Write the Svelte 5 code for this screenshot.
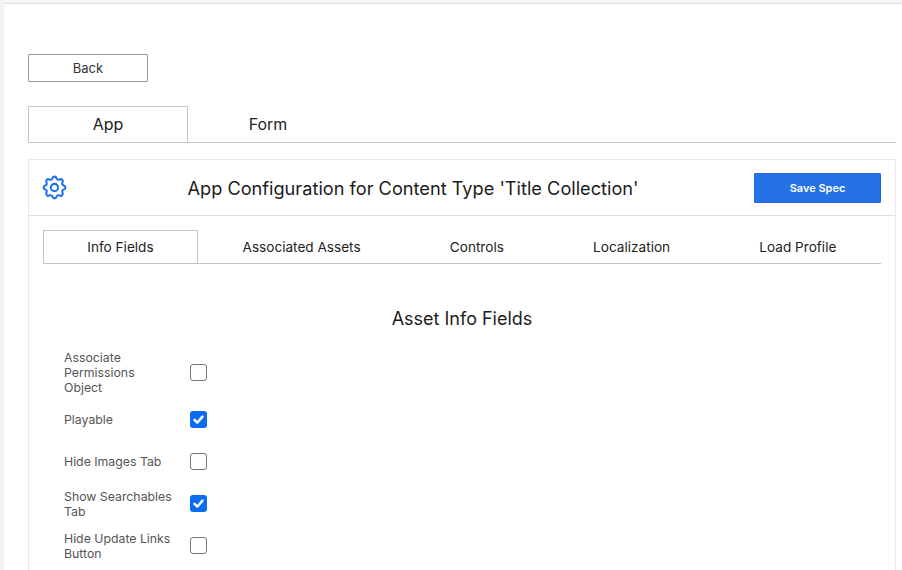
<script>
  const topTabs = ["App", "Form"];
  const subTabs = ["Info Fields", "Associated Assets", "Controls", "Localization", "Load Profile"];
  const fields = [
    { label: "Associate Permissions Object", checked: false },
    { label: "Playable", checked: true },
    { label: "Hide Images Tab", checked: false },
    { label: "Show Searchables Tab", checked: true },
    { label: "Hide Update Links Button", checked: false },
  ];
</script>

<div class="page">
  <main class="content">
    <button class="back">Back</button>

    <div class="tabs">
      {#each topTabs as tab, i}
        <div class="tab" class:active={i === 0}>{tab}</div>
      {/each}
    </div>

    <section class="panel">
      <header class="panel-head">
        <svg class="gear" viewBox="0 0 24 24" fill="none" stroke="currentColor" stroke-width="1.7" stroke-linecap="round" stroke-linejoin="round">
          <path d="M10.325 4.317c.426-1.756 2.924-1.756 3.35 0a1.724 1.724 0 002.573 1.066c1.543-.94 3.31.826 2.37 2.37a1.724 1.724 0 001.065 2.572c1.756.426 1.756 2.924 0 3.35a1.724 1.724 0 00-1.066 2.573c.94 1.543-.826 3.31-2.37 2.37a1.724 1.724 0 00-2.572 1.065c-.426 1.756-2.924 1.756-3.35 0a1.724 1.724 0 00-2.573-1.066c-1.543.94-3.31-.826-2.37-2.37a1.724 1.724 0 00-1.065-2.572c-1.756-.426-1.756-2.924 0-3.35a1.724 1.724 0 001.066-2.573c-.94-1.543.826-3.31 2.37-2.37.996.608 2.296.07 2.572-1.065z" />
          <circle cx="12" cy="12" r="3" />
        </svg>
        <h1>App Configuration for Content Type 'Title Collection'</h1>
        <button class="save">Save Spec</button>
      </header>

      <div class="panel-body">
        <div class="subtabs">
          {#each subTabs as tab, i}
            <div class="subtab" class:active={i === 0}>{tab}</div>
          {/each}
        </div>

        <h2>Asset Info Fields</h2>

        <div class="fields">
          {#each fields as field}
            <div class="field">
              <span class="label">{field.label}</span>
              <span class="check" class:on={field.checked}>
                {#if field.checked}
                  <svg viewBox="0 0 17 17" fill="none" stroke="#fff" stroke-width="2.4" stroke-linecap="round" stroke-linejoin="round">
                    <path d="M4.5 8.8l2.8 2.8 5.2-6" />
                  </svg>
                {/if}
              </span>
            </div>
          {/each}
        </div>
      </div>
    </section>
  </main>
</div>

<style>
  :global(body) {
    font-family: Inter, "Liberation Sans", sans-serif;
    background: #fff;
  }

  .page {
    height: 570px;
    overflow: hidden;
    box-sizing: border-box;
    border-top: 3px solid #f6f6f6;
    border-left: 4px solid #f3f3f3;
    box-shadow: inset 0 1px 0 #e2e2e2;
  }

  .content {
    padding: 51px 6px 0 24px;
  }

  button {
    font-family: inherit;
    cursor: pointer;
  }

  .back {
    display: block;
    width: 120px;
    height: 28px;
    padding: 0 0 1px;
    background: #fff;
    border: 1px solid #999;
    border-radius: 1px;
    color: #333;
    font-size: 13px;
  }

  .tabs {
    display: flex;
    margin-top: 24px;
    border-bottom: 1px solid #c4c4c4;
  }

  .tab {
    width: 160px;
    height: 36px;
    box-sizing: border-box;
    line-height: 37px;
    text-align: center;
    font-size: 16px;
    color: #222;
  }

  .tab.active {
    height: 37px;
    margin-bottom: -1px;
    border: 1px solid #c4c4c4;
    line-height: 35px;
  }

  .panel {
    margin-top: 16px;
    border: 1px solid #eaeaea;
    border-bottom: 0;
  }

  .panel-head {
    display: flex;
    align-items: center;
    height: 56px;
    box-sizing: border-box;
    padding: 0 14px;
    border-bottom: 1px solid #ddd;
  }

  .gear {
    flex: none;
    width: 29px;
    height: 29px;
    margin-left: -3px;
    color: #1f6fe8;
  }

  h1 {
    flex: 1;
    margin: 0;
    padding-left: 3px;
    text-align: center;
    font-size: 18.2px;
    font-weight: 400;
    color: #1c1c1c;
  }

  .save {
    flex: none;
    width: 127px;
    height: 30px;
    padding: 0;
    background: #2571e6;
    border: 1px solid #1f66d8;
    border-radius: 1px;
    color: #fff;
    font-size: 11px;
    font-weight: 600;
  }

  .panel-body {
    padding: 14px 14px 40px;
  }

  .subtabs {
    display: flex;
    border-bottom: 1px solid #c4c4c4;
  }

  .subtab {
    flex: 1 1 auto;
    height: 33px;
    box-sizing: border-box;
    padding: 0 40px;
    line-height: 34px;
    text-align: center;
    font-size: 13.6px;
    white-space: nowrap;
    color: #222;
  }

  .subtab.active {
    height: 34px;
    margin-bottom: -1px;
    padding: 0 38.7px;
    border: 1px solid #c4c4c4;
    line-height: 32px;
  }

  h2 {
    margin: 43px 0 0;
    text-align: center;
    font-size: 18px;
    font-weight: 400;
    line-height: 24px;
    color: #1c1c1c;
  }

  .fields {
    margin-top: 19px;
    padding-left: 21px;
  }

  .field {
    display: flex;
    align-items: center;
    min-height: 42px;
  }

  .field:first-child {
    padding-bottom: 3px;
  }

  .field:not(:first-child) .label {
    padding-top: 1px;
  }

  .label {
    width: 126px;
    padding-right: 14px;
    box-sizing: border-box;
    font-size: 12.3px;
    line-height: 15px;
    color: #555;
  }

  .check {
    flex: none;
    width: 17px;
    height: 17px;
    box-sizing: border-box;
    border: 1px solid #767676;
    border-radius: 3px;
    background: #fff;
  }

  .check.on {
    background: #0b6cf0;
    border: 0;
  }

  .check svg {
    display: block;
  }
</style>
